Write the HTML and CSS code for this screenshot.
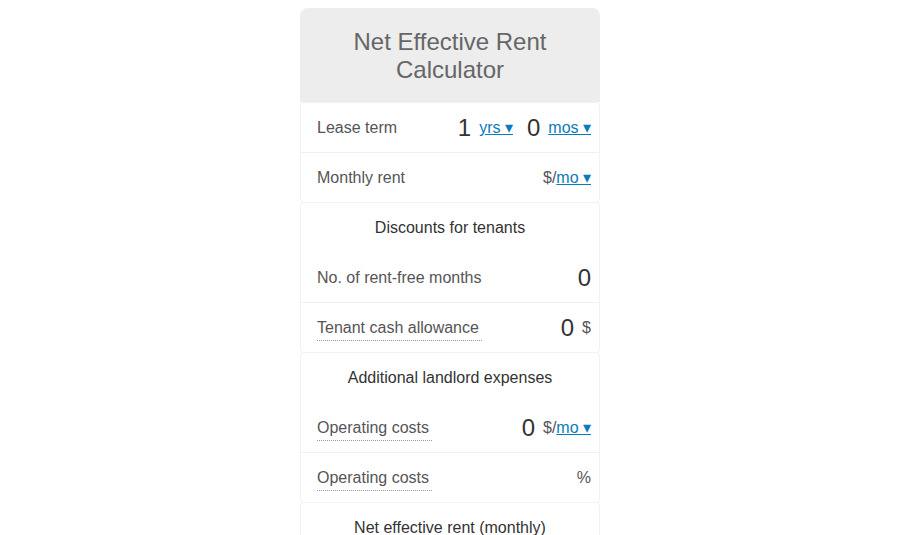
FILE: index.html
```html
<!DOCTYPE html>
<html><head>
<title>Net Effective Rent Calculator</title>
<link rel="stylesheet" href="styles.css">
<meta charset="UTF-8">
</head>
<body>
<div class="calc">

  <div class="calc-head">
    <h1>Net Effective Rent Calculator</h1>
  </div>

  <div class="block">
    <div class="row">
      <span class="label">Lease term</span>
      <span class="value">
        <span class="num">1</span><a class="unit" href="#">yrs &#9662;</a>
        <span class="num">0</span><a class="unit" href="#">mos &#9662;</a>
      </span>
    </div>
    <div class="row">
      <span class="label">Monthly rent</span>
      <span class="value"><span class="cur">$/</span><a class="unit" href="#">mo &#9662;</a></span>
    </div>
  </div>

  <div class="block">
    <div class="heading">Discounts for tenants</div>
    <div class="row">
      <span class="label">No. of rent-free months</span>
      <span class="value"><span class="num last">0</span></span>
    </div>
    <div class="row">
      <span class="label dotted">Tenant cash allowance</span>
      <span class="value"><span class="num">0</span><span class="cur">$</span></span>
    </div>
  </div>

  <div class="block">
    <div class="heading">Additional landlord expenses</div>
    <div class="row">
      <span class="label dotted">Operating costs</span>
      <span class="value"><span class="num">0</span><span class="cur">$/</span><a class="unit" href="#">mo &#9662;</a></span>
    </div>
    <div class="row">
      <span class="label dotted">Operating costs</span>
      <span class="value"><span class="cur">%</span></span>
    </div>
  </div>

  <div class="block">
    <div class="heading">Net effective rent (monthly)</div>
    <div class="row">
      <span class="label">Net effective rent</span>
      <span class="value"><span class="cur">$/</span><a class="unit" href="#">mo &#9662;</a></span>
    </div>
  </div>

</div>
</body></html>
```

FILE: styles.css
```css
body {
    margin: 0;
    padding: 8px 0;
    font-family: "Liberation Sans", Arial, sans-serif;
    background: #fff;
    color: #333;
}

.calc {
    width: 300px;
    margin: 0 auto;
}

.calc-head {
    background: #ededed;
    border-radius: 8px 8px 0 0;
    padding: 20px 16px 18px;
}
.calc-head h1 {
    margin: 0;
    font-size: 24px;
    line-height: 28px;
    font-weight: normal;
    text-align: center;
    color: #666;
}

/* each group of rows is its own little card */
.block {
    border: 1px solid #f2f2f2;
    border-radius: 4px;
    background: #fff;
    margin-bottom: -1px;
}

.heading {
    height: 50px;
    line-height: 50px;
    text-align: center;
    font-size: 16px;
    color: #333;
}

.row {
    display: flex;
    align-items: center;
    justify-content: space-between;
    height: 49px;
    padding: 0 8px 0 16px;
    border-bottom: 1px solid #f0f0f0;
}
.block .row:last-child { border-bottom: none; }

.label { font-size: 16px; color: #555; }
.label.dotted {
    padding: 3px 3px 2px 0;
    line-height: 20px;
    border-bottom: 1px dotted #999;
    margin-top: 1px;
}

.value { display: flex; align-items: center; }
.num { font-size: 24px; color: #333; margin-right: 8px; }
.num.last { margin-right: 0; }
.cur { font-size: 16px; color: #555; }
.unit { font-size: 16px; color: #0a7cbb; margin-right: 14px; }
.unit:last-child { margin-right: 0; }
```
